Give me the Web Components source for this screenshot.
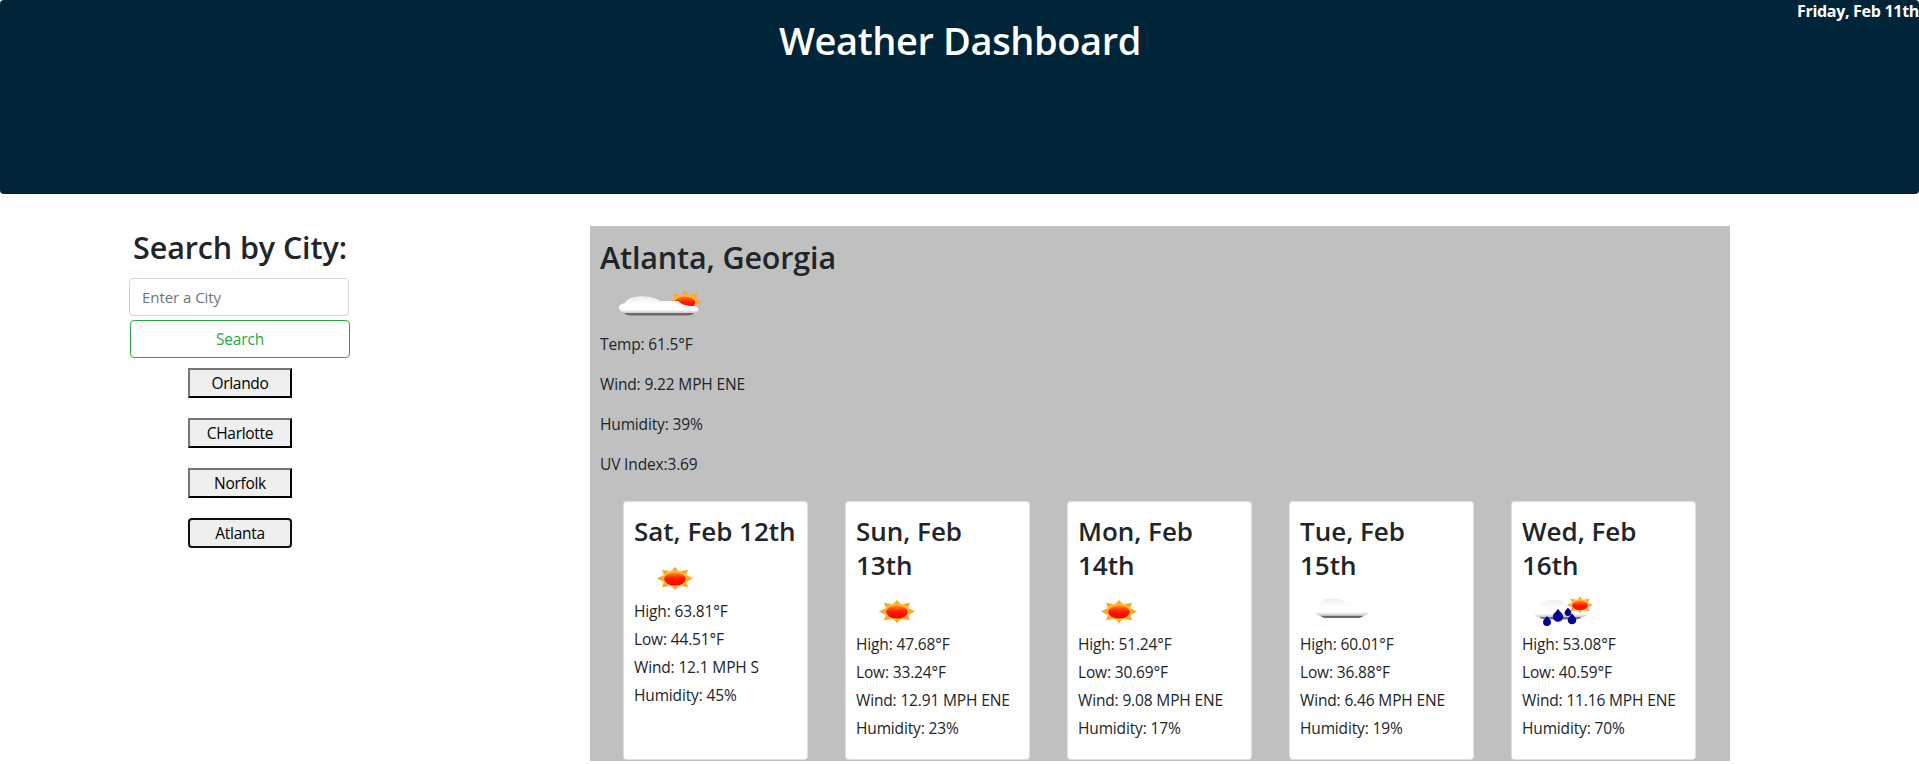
<!DOCTYPE html>
<html><head><meta charset="utf-8"><style>
html,body{margin:0;padding:0;background:#fff;overflow:hidden;height:764px}
body{font-family:"Open Sans","Noto Sans",sans-serif;color:#212529;font-size:16px}
weather-app{display:block}
</style></head><body>
<weather-app></weather-app>
<script>
const FONT='"Open Sans","Noto Sans",sans-serif';
const SUN=(cx,cy,s)=>{let o='';for(let i=0;i<8;i++){const a=i*Math.PI/4,c=Math.cos(a),n=Math.sin(a),diag=i%2==1;
 const tx=(diag?18.5:18)*c,ty=(diag?12.5:11.5)*n,bx=12*c,by=7.8*n,px=-n*3.6,py=c*3.6*.8;
 o+=`<polygon points="${tx},${ty} ${bx+px},${by+py} ${bx-px},${by-py}" fill="#ffa51f"/>`}
 return `<g transform="translate(${cx},${cy}) scale(${s})">${o}<ellipse rx="12.5" ry="8" fill="#ffb52e"/><ellipse cy=".6" rx="10.8" ry="6.4" fill="url(#s)"/></g>`};
const drop=(x,y,r)=>`<path d="M${x} ${y-1.5*r}C${x+.3*r} ${y-r} ${x+r} ${y-.5*r} ${x+r} ${y}A${r} ${r} 0 1 1 ${x-r} ${y}C${x-r} ${y-.5*r} ${x-.3*r} ${y-r} ${x} ${y-1.5*r}Z"/>`;
const ICONS={
 sun:()=>SUN(41,22.5,1),
 cloud:()=>`<path d="M20 26.500L64 26.500C62 28.500 60 29 57 29L27 29C24 29 22 28.500 20 26.500Z" fill="#6a6a6a"/><path d="M16 25C12 22 15 17 19 16C20 11 27 9 33 9C39 9 44 11 46 15C50 13 55 14 57 17C61 17 69 19 69 23C69 25 67 26.500 64 26.500L20 26.500C18 26.500 17 26 16 25Z" fill="url(#c)"/>`,
 partly:()=>`${SUN(85,22,.95)}<path d="M24 33L94 33C92 35 90 35.500 86 35.500L32 35.500C28 35.500 26 35 24 33Z" fill="#6a6a6a"/><path d="M20 30C17 27 20 24 25 23C27 18 38 15 50 17C55 18 57 19 60 21L78 21C81 24 86 26 94 26C99 27 100 31 96 33L24 33C22 33 21 31 20 30Z" fill="url(#c)"/>`,
 rain:()=>`<path d="M17 28L60 28C58 30 56 30.500 52 30.500L25 30.500C21 30.500 19 30 17 28Z" fill="#777"/><path d="M13 26C9 23 13 18 18 17C21 12 28 10 35 11C41 12 44 15 46 17L58 19C65 21 66 26 62 28L17 28C15 28 14 27 13 26Z" fill="url(#c)"/>${SUN(58,16,.72)}<g fill="#00009a">${drop(25,33,4)}${drop(36,27.5,5.2)}${drop(46,23.5,3.4)}${drop(50,31,4.3)}</g>`
};
function comp(name,css,html,extra){
 customElements.define(name,class extends HTMLElement{
  constructor(){super();this.attachShadow({mode:'open'});}
  connectedCallback(){if(this._done)return;this._done=1;const h=typeof html==='function'?html(this):html;this.shadowRoot.innerHTML=`<style>${css}</style>${h}`;if(extra)extra(this)}
 });
}
comp('weather-icon',`:host{display:block;width:var(--w,80px);height:var(--h,43px)}svg{display:block;width:100%;height:100%;overflow:visible}`,el=>{
 const k=el.getAttribute('kind'),w=el.getAttribute('w')||80,h=el.getAttribute('h')||43;
 el.style.setProperty('--w',w+'px');el.style.setProperty('--h',h+'px');
 return `<svg viewBox="0 0 ${w} ${h}" aria-hidden="true"><defs>
 <linearGradient id="c" x1="0" y1="0" x2="0" y2="1"><stop offset="0" stop-color="#ececec"/><stop offset=".45" stop-color="#fff"/><stop offset=".8" stop-color="#fff"/><stop offset="1" stop-color="#c8c8c8"/></linearGradient>
 <linearGradient id="s" x1="0" y1="0" x2="0" y2="1"><stop offset="0" stop-color="#ff8a00"/><stop offset=".45" stop-color="#ff1a00"/><stop offset="1" stop-color="#ff0000"/></linearGradient>
 <filter id="b" x="-10%" y="-10%" width="120%" height="120%"><feGaussianBlur stdDeviation=".5"/></filter></defs><g filter="url(#b)">${ICONS[k]()}</g></svg>`;});
comp('app-header',`:host{display:block;height:194px;background:#002438;color:#fff;border-radius:4px;position:relative;text-align:center}
 h1{margin:0;padding:16px 0 0 1px;font:600 38px/48px ${FONT};letter-spacing:-.4px}
 .date{position:absolute;right:0;top:1px;font:700 16px/20px ${FONT};letter-spacing:-.3px}`,
 `<h1><slot></slot></h1><div class="date"><slot name="date"></slot></div>`);
comp('city-button',`:host{display:block;margin-bottom:20px}
 button{display:block;box-sizing:border-box;width:104px;height:30px;margin:0;padding:0;background:#efefef;border:2px outset #767676;border-color:#767676 #1a1a1a #1a1a1a #767676;font:15.5px/22px ${FONT};letter-spacing:-.3px;color:#000}
 :host([active]) button{border:2px solid #101010;border-radius:4px}`,`<button><slot></slot></button>`);
comp('city-search',`:host{display:flex;flex-direction:column;align-items:center;width:480px;flex:none}
 h2{margin:0 0 5px;padding-top:2px;font:600 30.5px/38px ${FONT};letter-spacing:-.1px;color:#212529;height:45px}
 input{box-sizing:border-box;width:220px;height:38px;margin-left:-2px;padding:0 12px;border:1px solid #ced4da;border-radius:4px;font:15px ${FONT};letter-spacing:-.05px;color:#495057;background:#fff}
 input::placeholder{color:#6c757d;opacity:1}
 .go{box-sizing:border-box;width:220px;height:38px;margin:4px 0 10px;background:transparent;border:1px solid #28a745;color:#28a745;border-radius:4px;font:15.5px ${FONT};letter-spacing:-.15px;padding:0}`,
 `<h2>Search by City:</h2><input placeholder="Enter a City" aria-label="City"><button class="go">Search</button><slot></slot>`);
comp('forecast-card',`:host{display:block;box-sizing:border-box;width:185px;height:259px;flex:none;background:#fff;border:1px solid rgba(0,0,0,.125);border-radius:4px;padding:13px 11px 12px 10px}
 h3{margin:0 0 7px;font:600 26px/33.5px ${FONT};letter-spacing:-.02px;color:#212529}
 ::slotted(p){margin:0 0 4px;font:15.5px/24px ${FONT};letter-spacing:-.15px}
 .ic{display:block}`,
 el=>`<h3>${el.getAttribute('day')}</h3><weather-icon kind="${el.getAttribute('icon')}" class="ic"></weather-icon><slot></slot>`);
comp('current-weather',`:host{display:block;box-sizing:border-box;width:1140px;height:535px;background:#c0c0c0;padding:8px 10px 0;flex:none}
 h2{margin:0 0 4px;padding-top:4px;font:600 30.5px/38px ${FONT};letter-spacing:-.15px;color:#212529}
 ::slotted(p){margin:0 0 16px;font:15.5px/24px ${FONT};letter-spacing:-.15px;color:#212529}
 weather-icon{margin-bottom:1px}
 .row{margin:25px 0 0 23px}`,
 el=>`<h2>${el.getAttribute('place')}</h2><weather-icon kind="partly" w="111" h="51"></weather-icon><slot></slot><div class="row"><slot name="cards"></slot></div>`);
comp('forecast-row',`:host{display:flex;gap:37px}`,`<slot></slot>`);
comp('weather-app',`:host{display:block}
 .body{display:flex;padding-top:32px}
 main{margin-left:110px}`,
 `<app-header>Weather Dashboard<span slot="date">Friday, Feb 11th</span></app-header>
 <div class="body"><city-search><city-button>Orlando</city-button><city-button>CHarlotte</city-button><city-button>Norfolk</city-button><city-button active>Atlanta</city-button></city-search>
 <main><current-weather place="Atlanta, Georgia"><p>Temp: 61.5°F</p><p>Wind: 9.22 MPH ENE</p><p>Humidity: 39%</p><p>UV Index:3.69</p>
 <forecast-row slot="cards">
 <forecast-card day="Sat, Feb 12th" icon="sun"><p>High: 63.81°F</p><p>Low: 44.51°F</p><p>Wind: 12.1 MPH S</p><p>Humidity: 45%</p></forecast-card>
 <forecast-card day="Sun, Feb 13th" icon="sun"><p>High: 47.68°F</p><p>Low: 33.24°F</p><p>Wind: 12.91 MPH ENE</p><p>Humidity: 23%</p></forecast-card>
 <forecast-card day="Mon, Feb 14th" icon="sun"><p>High: 51.24°F</p><p>Low: 30.69°F</p><p>Wind: 9.08 MPH ENE</p><p>Humidity: 17%</p></forecast-card>
 <forecast-card day="Tue, Feb 15th" icon="cloud"><p>High: 60.01°F</p><p>Low: 36.88°F</p><p>Wind: 6.46 MPH ENE</p><p>Humidity: 19%</p></forecast-card>
 <forecast-card day="Wed, Feb 16th" icon="rain"><p>High: 53.08°F</p><p>Low: 40.59°F</p><p>Wind: 11.16 MPH ENE</p><p>Humidity: 70%</p></forecast-card>
 </forecast-row></current-weather></main></div>`);
</script>
</body></html>
